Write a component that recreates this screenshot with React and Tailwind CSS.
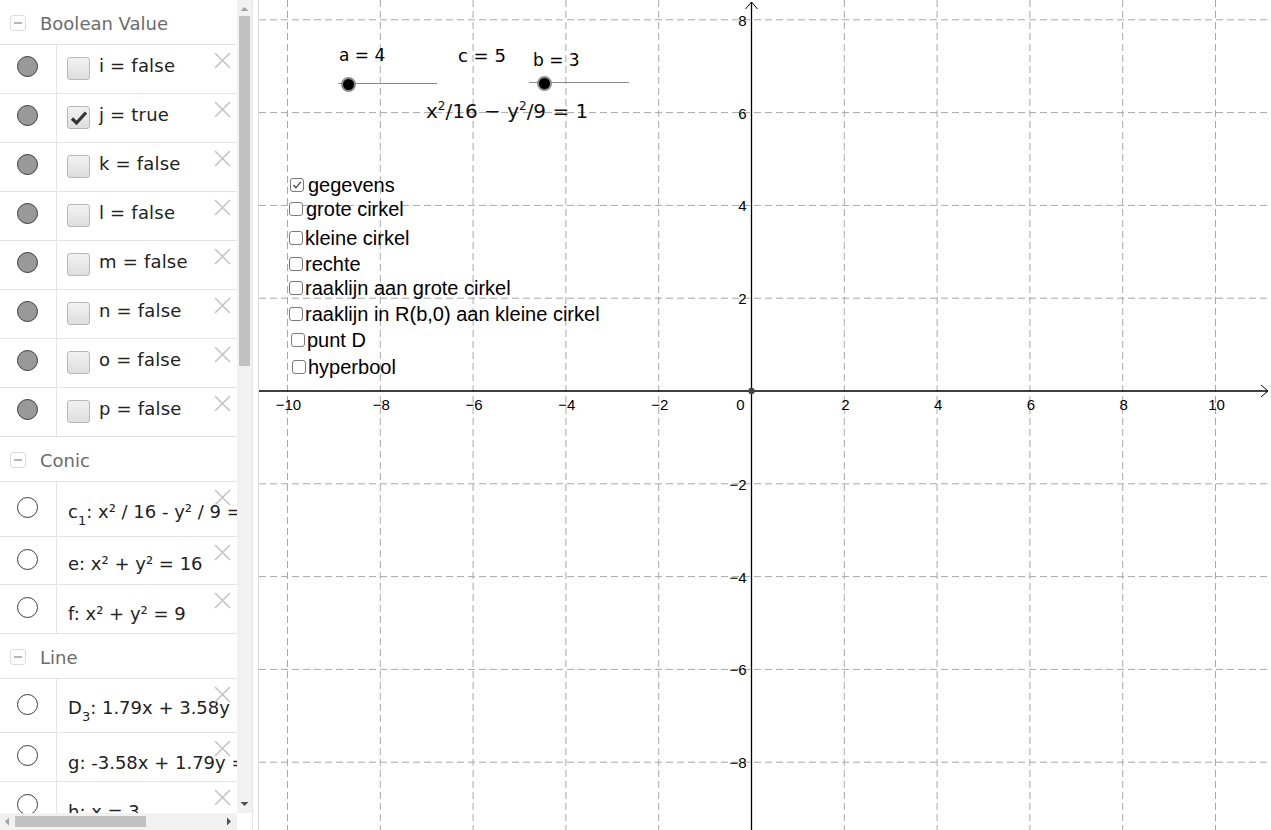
import React from 'react';

const S = 92.8;
const OX = 492.5;
const OY = 391;

function CloseX({ className = '' }) {
  return (
    <svg width="19" height="19" viewBox="0 0 19 19" className={className}>
      <path d="M2 2 L17 17 M17 2 L2 17" stroke="#c4c4c4" strokeWidth="1.6" fill="none" />
    </svg>
  );
}

function SectionHeader({ title }) {
  return (
    <div className="h-[45px] flex items-center border-b border-[#e3e3e3] pt-[2px]">
      <div className="ml-[10px] w-[16px] h-[16px] border border-[#dcdcdc] rounded-[3px] flex items-center justify-center">
        <div className="w-[8px] h-[1.5px] bg-[#b5b5b5]" />
      </div>
      <span className="ml-[14px] text-[18px] text-[#6b6b6b]">{title}</span>
    </div>
  );
}

function BoolRow({ name, value, checked }) {
  return (
    <div className="h-[49px] flex border-b border-[#e3e3e3]">
      <div className="w-[57px] shrink-0 border-r border-[#e3e3e3] flex items-center justify-center pb-[5px] pr-[2px]">
        <div className="w-[21px] h-[21px] rounded-full bg-[#999999] border border-[#3a3a3a]" />
      </div>
      <div className="relative flex-1 flex items-center pl-[10px] pb-[7px]">
        <div className="mt-[6px] w-[23px] h-[23px] rounded-[3px] border border-[#b8b8b8] bg-gradient-to-b from-[#f2f2f2] to-[#dedede] flex items-center justify-center">
          {checked && (
            <svg width="18" height="16" viewBox="0 0 18 16">
              <path d="M2 8.5 L6.5 13 L16 2.5" stroke="#333" strokeWidth="3.2" fill="none" />
            </svg>
          )}
        </div>
        <span className="ml-[9px] text-[18px] text-[#222] tracking-[0.2px]">
          {name} = {value}
        </span>
        <CloseX className="absolute right-[5px] top-[6px]" />
      </div>
    </div>
  );
}

function ObjRow({ h, children, top = 'pt-[0px]' }) {
  return (
    <div className={`flex border-b border-[#e3e3e3] ${h}`}>
      <div className="w-[57px] shrink-0 border-r border-[#e3e3e3] flex items-center justify-center pr-[2px] pb-[3px]">
        <div className="w-[21px] h-[21px] rounded-full bg-white border border-[#3a3a3a]" />
      </div>
      <div className={`relative flex-1 flex items-center pl-[11px] overflow-hidden ${top}`}>
        <span className="whitespace-nowrap text-[18px] text-[#222]">{children}</span>
        <CloseX className="absolute right-[5px] top-[6px]" />
      </div>
    </div>
  );
}

function Sidebar() {
  return (
    <div className="w-[252px] shrink-0 flex flex-col h-full font-['DejaVu_Sans',sans-serif]">
      <div className="flex flex-1 min-h-0">
        <div className="w-[237px] overflow-hidden">
          <SectionHeader title="Boolean Value" />
          <BoolRow name="i" value="false" />
          <BoolRow name="j" value="true" checked />
          <BoolRow name="k" value="false" />
          <BoolRow name="l" value="false" />
          <BoolRow name="m" value="false" />
          <BoolRow name="n" value="false" />
          <BoolRow name="o" value="false" />
          <BoolRow name="p" value="false" />
          <SectionHeader title="Conic" />
          <ObjRow h="h-[55px]" top="pt-[4px]">
            c<sub className="text-[13px] align-[-4px]">1</sub>: x² / 16 - y² / 9 = 1
          </ObjRow>
          <ObjRow h="h-[48px]" top="pt-[6px]">e: x² + y² = 16</ObjRow>
          <ObjRow h="h-[49px]" top="pt-[8px]">f: x² + y² = 9</ObjRow>
          <SectionHeader title="Line" />
          <ObjRow h="h-[54px]" top="pt-[4px]">
            D<sub className="text-[13px] align-[-4px]">3</sub>: 1.79x + 3.58y = 8.02
          </ObjRow>
          <ObjRow h="h-[49px]" top="pt-[10px]">g: -3.58x + 1.79y = -10.73</ObjRow>
          <ObjRow h="h-[49px]" top="pt-[10px]">h: x = 3</ObjRow>
        </div>
        <div className="w-[15px] bg-[#f1f1f1] flex flex-col items-center">
          <svg width="9" height="6" viewBox="0 0 9 6" className="mt-[6px]">
            <path d="M0.5 5 L4.5 1 L8.5 5 Z" fill="#a3a3a3" />
          </svg>
          <div className="mt-[4px] w-[11px] h-[350px] bg-[#c1c1c1]" />
          <div className="flex-1" />
          <svg width="9" height="6" viewBox="0 0 9 6" className="mb-[6px]">
            <path d="M0.5 1 L4.5 5 L8.5 1 Z" fill="#505050" />
          </svg>
        </div>
      </div>
      <div className="h-[17px] flex">
        <div className="w-[237px] bg-[#f1f1f1] flex items-center">
          <svg width="6" height="9" viewBox="0 0 6 9" className="ml-[4px]">
            <path d="M5 0.5 L1 4.5 L5 8.5 Z" fill="#a3a3a3" />
          </svg>
          <div className="ml-[5px] w-[131px] h-[11px] bg-[#c1c1c1]" />
          <div className="flex-1" />
          <svg width="6" height="9" viewBox="0 0 6 9" className="mr-[5px]">
            <path d="M1 0.5 L5 4.5 L1 8.5 Z" fill="#505050" />
          </svg>
        </div>
        <div className="w-[15px] bg-white" />
      </div>
    </div>
  );
}

function GridSvg() {
  const vx = [];
  for (let k = -6; k <= 6; k++) if (k !== 0) vx.push(k);
  const hy = [];
  for (let k = -5; k <= 5; k++) if (k !== 0) hy.push(k);
  return (
    <svg width="1012" height="830" className="block">
      {vx.map(k => {
        const x = OX + k * S;
        return <line key={'v' + k} x1={x} y1="0" x2={x} y2="830" stroke="#a8a8a8" strokeWidth="1" strokeDasharray="7 4" />;
      })}
      {hy.map(k => {
        const y = OY - k * S;
        return <line key={'h' + k} x1="0" y1={y} x2="1012" y2={y} stroke="#a8a8a8" strokeWidth="1" strokeDasharray="7 4" />;
      })}
      <line x1="0" y1={OY} x2="1009" y2={OY} stroke="#000" strokeWidth="1.3" />
      <path d={`M1002 ${OY - 6} L1009 ${OY} L1002 ${OY + 6}`} stroke="#000" strokeWidth="1" fill="none" />
      <line x1={OX} y1="2" x2={OX} y2="830" stroke="#000" strokeWidth="1.3" />
      <path d={`M${OX - 6} 9 L${OX} 2 L${OX + 6} 9`} stroke="#000" strokeWidth="1" fill="none" />
      <circle cx={OX} cy={OY} r="3.2" fill="#444" />
      <g fontFamily="'Liberation Sans', Arial, sans-serif" fontSize="15" fill="#000">
        {[-10, -8, -6, -4, -2, 2, 4, 6, 8, 10].map(v => (
          <text key={'xl' + v} x={OX + (v / 2) * S + 1} y={OY + 19} textAnchor="middle">
            {v < 0 ? '\u2212' + -v : v}
          </text>
        ))}
        <text x={OX - 7} y={OY + 19} textAnchor="end">0</text>
        {[8, 6, 4, 2, -2, -4, -6, -8].map(v => (
          <text key={'yl' + v} x={OX - 5} y={OY - (v / 2) * S + 6} textAnchor="end">
            {v < 0 ? '\u2212' + -v : v}
          </text>
        ))}
      </g>
    </svg>
  );
}

function Slider({ left, top, width, knob }) {
  return (
    <div className="absolute" style={{ left, top, width }}>
      <div className="relative h-[14px]">
        <div className="absolute left-0 right-0 top-[6px] h-px bg-[#8a8a8a]" />
        <div
          className="absolute top-0 w-[15px] h-[15px] rounded-full bg-black border-[2.5px] border-[#8c8c8c]"
          style={{ left: knob - 7 }}
        />
      </div>
    </div>
  );
}

function Check({ label, checked, left, top, textGap }) {
  return (
    <div className="absolute flex items-center" style={{ left, top }}>
      <div className="w-[14px] h-[14px] border border-[#7a7a7a] rounded-[3px] bg-white flex items-center justify-center">
        {checked && (
          <svg width="10" height="10" viewBox="0 0 10 10">
            <path d="M1.5 5 L4 7.8 L8.8 1.8" stroke="#444" strokeWidth="1.3" fill="none" />
          </svg>
        )}
      </div>
      <span className="text-[20px] leading-[22px] text-black" style={{ marginLeft: textGap }}>{label}</span>
    </div>
  );
}

function Canvas() {
  return (
    <div className="relative flex-1 h-full overflow-hidden bg-white">
      <GridSvg />
      <div className="absolute inset-0 font-['DejaVu_Sans',sans-serif]">
        <div className="absolute left-[80px] top-[44px] text-[17px] leading-[22px] text-black">a = 4</div>
        <div className="absolute left-[199px] top-[45px] text-[18px] leading-[22px] text-black">c = 5</div>
        <div className="absolute left-[274px] top-[49px] text-[17px] leading-[22px] text-black">b = 3</div>
        <Slider left={79} top={77} width={99} knob={10} />
        <Slider left={270} top={76} width={100} knob={15} />
        <div className="absolute left-[167px] top-[98px] text-[20px] leading-[26px] text-[#111]">
          x<sup className="text-[12px] leading-none align-[2px]">2</sup>/16 − y<sup className="text-[12px] leading-none align-[2px]">2</sup>/9 = 1
        </div>
      </div>
      <div className="absolute inset-0 font-['Liberation_Sans',Arial,sans-serif]">
        <Check label="gegevens" checked left={31} top={174} textGap={4} />
        <Check label="grote cirkel" left={30} top={198} textGap={3} />
        <Check label="kleine cirkel" left={30} top={227} textGap={2} />
        <Check label="rechte" left={30} top={253} textGap={2} />
        <Check label="raaklijn aan grote cirkel" left={30} top={277} textGap={2} />
        <Check label="raaklijn in R(b,0) aan kleine cirkel" left={30} top={303} textGap={2} />
        <Check label="punt D" left={32} top={329} textGap={2} />
        <Check label="hyperbool" left={33} top={356} textGap={2} />
      </div>
    </div>
  );
}

export default function App() {
  return (
    <div className="w-[1271px] h-[830px] flex overflow-hidden bg-white">
      <Sidebar />
      <div className="w-[7px] shrink-0 border-l border-[#e6e6e6] border-r border-r-[#dcdcdc] bg-white" />
      <Canvas />
    </div>
  );
}
